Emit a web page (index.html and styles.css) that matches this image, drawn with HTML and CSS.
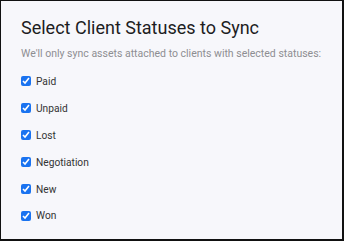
FILE: index.html
```html
<!DOCTYPE html>
<html lang="en">
<head>
    <meta charset="UTF-8">
    <title>Sync Statuses</title>
    <link rel="stylesheet" href="styles.css">
</head>
<body>
    <div class="panel">
        <h1>Select Client Statuses to Sync</h1>
        <p class="hint">We'll only sync assets attached to clients with selected statuses:</p>
        <ul class="statuses">
            <li><label><input type="checkbox" checked> Paid</label></li>
            <li><label><input type="checkbox" checked> Unpaid</label></li>
            <li><label><input type="checkbox" checked> Lost</label></li>
            <li><label><input type="checkbox" checked> Negotiation</label></li>
            <li><label><input type="checkbox" checked> New</label></li>
            <li><label><input type="checkbox" checked> Won</label></li>
        </ul>
    </div>
</body>
</html>
```

FILE: styles.css
```css
body {
    margin: 0;
    font-family: Roboto, "Noto Sans", sans-serif;
    background: #fff;
}

/* Outer panel */
.panel {
    box-sizing: border-box;
    width: 344px;
    height: 241px;
    background: #f7f7fb;
    border: 1px solid #111;
    border-right-width: 2px;
    border-bottom-width: 2px;
    padding: 16px 20px 0 20px;
}

h1 {
    margin: 0;
    font-size: 18px;
    font-weight: 400;
    color: #1d1d1f;
    line-height: 22px;
}

.hint {
    margin: 7.5px 0 8.5px;
    font-size: 10.5px;
    color: #8e8e92;
    line-height: 13px;
    white-space: nowrap;
}

.statuses {
    list-style: none;
    margin: 0;
    padding: 0;
}

.statuses li {
    height: 26.9px;
    display: flex;
    align-items: center;
}

.statuses label {
    display: flex;
    align-items: center;
    font-size: 10.2px;
    color: #333;
}

.statuses input {
    width: 10px;
    height: 10px;
    margin: 0 5px 0 0;
    accent-color: #1a73f0;
}
```
